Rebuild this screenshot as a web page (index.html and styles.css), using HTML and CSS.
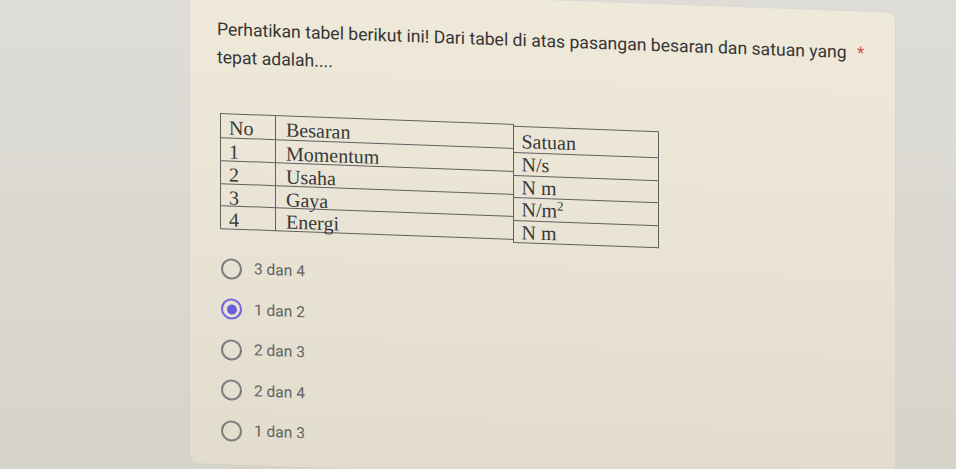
FILE: index.html
```html
<!DOCTYPE html>
<html lang="id">
<head>
<meta charset="utf-8">
<title>Soal</title>
<link rel="stylesheet" href="styles.css">
</head>
<body>
<div class="page">
  <div class="card">
    <div class="title-row">
      <div class="title">Perhatikan tabel berikut ini! Dari tabel di atas pasangan besaran dan satuan yang tepat adalah....</div>
      <span class="req">*</span>
    </div>

    <div class="table-img">
      <div class="tbl tbl-left">
        <div class="row h24"><div class="cell c-no">No</div><div class="cell c-bes">Besaran</div></div>
        <div class="row h23"><div class="cell c-no">1</div><div class="cell c-bes">Momentum</div></div>
        <div class="row h23"><div class="cell c-no">2</div><div class="cell c-bes">Usaha</div></div>
        <div class="row h22"><div class="cell c-no">3</div><div class="cell c-bes">Gaya</div></div>
        <div class="row h23"><div class="cell c-no">4</div><div class="cell c-bes">Energi</div></div>
      </div>
      <div class="tbl tbl-right">
        <div class="row h26"><div class="cell c-sat head">Satuan</div></div>
        <div class="row h23"><div class="cell c-sat">N/s</div></div>
        <div class="row h22"><div class="cell c-sat">N m</div></div>
        <div class="row h23"><div class="cell c-sat">N/m<sup>2</sup></div></div>
        <div class="row h22"><div class="cell c-sat">N m</div></div>
      </div>
    </div>

    <div class="options">
      <div class="opt"><span class="radio"></span><span class="opt-text">3 dan 4</span></div>
      <div class="opt"><span class="radio checked"></span><span class="opt-text">1 dan 2</span></div>
      <div class="opt"><span class="radio"></span><span class="opt-text">2 dan 3</span></div>
      <div class="opt"><span class="radio"></span><span class="opt-text">2 dan 4</span></div>
      <div class="opt"><span class="radio"></span><span class="opt-text">1 dan 3</span></div>
    </div>
  </div>
</div>
</body>
</html>
```

FILE: styles.css
```css
html, body {
  margin: 0;
  padding: 0;
}

body {
  width: 956px;
  height: 469px;
  overflow: hidden;
  background: linear-gradient(180deg, #dddcd7 0%, #dad8d0 55%, #d6d3c8 100%);
  font-family: Roboto, "Liberation Sans", sans-serif;
}

.page {
  padding-left: 190px;
}

.card {
  box-sizing: border-box;
  width: 705px;
  height: 476px;
  margin-top: -13px;
  padding: 27px 0 0 27px;
  border-radius: 8px;
  background: linear-gradient(180deg, #efe9da 0%, #e9e4d5 45%, #e1dccc 100%);
  box-shadow: 0 0 2px rgba(0, 0, 0, 0.06);
  transform: skewY(2.1deg);
  transform-origin: 0 0;
}

.title-row {
  display: flex;
  align-items: flex-start;
}

.title {
  width: 640px;
  font-size: 17.6px;
  line-height: 28px;
  color: #353535;
}

.req {
  font-size: 17px;
  line-height: 28px;
  color: #d25252;
}

/* embedded table picture */
.table-img {
  display: flex;
  align-items: flex-start;
  margin: 42px 0 0 3px;
  font-family: "Liberation Serif", "Times New Roman", serif;
  font-size: 20px;
  line-height: 20px;
  color: #383838;
}

.tbl {
  border-top: 1.5px solid #606060;
  border-left: 1.5px solid #606060;
}

.tbl-right {
  margin-top: 2px;
  margin-left: -1.5px;
}

.row {
  display: flex;
  box-sizing: border-box;
}

.h22 { height: 22px; }
.h23 { height: 23px; }
.h24 { height: 24px; }
.h26 { height: 26px; }

.cell {
  box-sizing: border-box;
  height: 100%;
  border-right: 1.5px solid #606060;
  border-bottom: 1.5px solid #606060;
  white-space: nowrap;
}

.c-no {
  width: 55px;
  padding: 3px 0 0 8px;
}

.c-bes {
  width: 238px;
  padding: 3px 0 0 10px;
}

.c-sat {
  width: 145px;
  padding: 1px 0 0 8px;
}

.c-sat.head {
  padding-top: 4px;
}

.c-sat sup {
  font-size: 13px;
  line-height: 0;
  vertical-align: 7px;
}

/* options */
.options {
  margin-top: 16px;
  margin-left: 4px;
}

.opt {
  display: flex;
  align-items: center;
  height: 40.5px;
}

.radio {
  box-sizing: border-box;
  width: 21px;
  height: 21px;
  border: 2px solid #7d7d7d;
  border-radius: 50%;
  display: flex;
  align-items: center;
  justify-content: center;
  flex: none;
}

.radio.checked {
  border-color: #7467dc;
}

.radio.checked::after {
  content: "";
  width: 10px;
  height: 10px;
  border-radius: 50%;
  background: #6a5bd8;
}

.opt-text {
  margin-left: 12px;
  font-size: 15.5px;
  color: #626262;
}
```
